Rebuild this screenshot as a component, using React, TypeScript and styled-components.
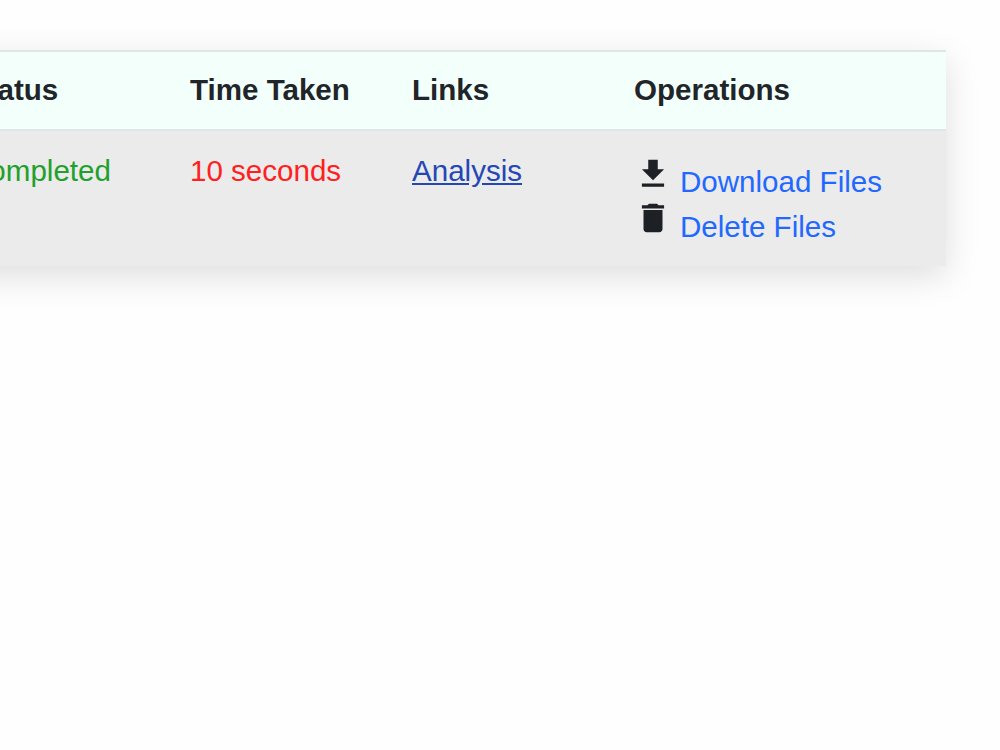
import React from "react";
import styled, { createGlobalStyle } from "styled-components";

const Global = createGlobalStyle`
  html, body { margin: 0; padding: 0; background: #fefefe; overflow: hidden; }
  body { font-family: "Liberation Sans", Arial, sans-serif; color: #212529; }
`;

const Page = styled.div`
  width: 1000px;
  height: 750px;
  overflow: hidden;
  padding-top: 50px;
  box-sizing: border-box;
`;

const Table = styled.table`
  width: 996px;
  margin-left: -50px;
  table-layout: fixed;
  border-collapse: separate;
  border-spacing: 0;
  font-size: 29.55px;
  line-height: 45px;
  box-shadow: 0 10px 32px rgba(0, 0, 0, 0.13);
`;

const Col = styled.col<{ $w: number }>`
  width: ${(p) => p.$w}px;
`;

const HeadRow = styled.tr`
  background: #f3fffb;
`;

const HeadCell = styled.th`
  padding: 15px 0 17px 0;
  text-align: left;
  font-weight: 700;
  color: #212529;
  border-top: 2px solid #e0e5e8;
  border-bottom: 2px solid #e0e5e8;
  box-sizing: border-box;
  &:first-child { padding-left: 18px; }
`;

const BodyRow = styled.tr`
  background: #ebebeb;
`;

const Cell = styled.td<{ $color?: string }>`
  padding: 17px 0 17px 0;
  vertical-align: top;
  color: ${(p) => p.$color ?? "#212529"};
  &:first-child { padding-left: 18px; }
`;

const TextLink = styled.a`
  color: #2447b5;
  text-decoration: underline;
`;

const Operations = styled.div`
  display: flex;
  flex-direction: column;
  padding-top: 11px;
`;

const Operation = styled.div`
  display: flex;
  height: 45px;
  align-items: flex-start;
`;

const IconBox = styled.svg<{ $lift: number }>`
  width: 38px;
  height: 38px;
  flex: none;
  margin-top: ${(p) => -p.$lift}px;
  margin-right: 8px;
  fill: #1d2024;
`;

const OpLink = styled.a`
  color: #2268ff;
  text-decoration: none;
`;

export default function App() {
  return (
    <>
      <Global />
      <Page>
        <Table>
          <colgroup>
            <Col $w={240} />
            <Col $w={222} />
            <Col $w={222} />
            <Col $w={312} />
          </colgroup>
          <thead>
            <HeadRow>
              <HeadCell>Status</HeadCell>
              <HeadCell>Time Taken</HeadCell>
              <HeadCell>Links</HeadCell>
              <HeadCell>Operations</HeadCell>
            </HeadRow>
          </thead>
          <tbody>
            <BodyRow>
              <Cell $color="#22a02c">Completed</Cell>
              <Cell $color="#ff2020">10 seconds</Cell>
              <Cell><TextLink href="#">Analysis</TextLink></Cell>
              <Cell>
                <Operations>
                  <Operation>
                    <IconBox $lift={4} viewBox="0 0 24 24"><path d="M19 9h-4V3H9v6H5l7 7 7-7zM5 18v2h14v-2H5z" /></IconBox>
                    <OpLink href="#">Download Files</OpLink>
                  </Operation>
                  <Operation>
                    <IconBox $lift={5} viewBox="0 0 24 24"><path d="M6 19c0 1.1.9 2 2 2h8c1.1 0 2-.9 2-2V7H6v12zM19 4h-3.5l-1-1h-5l-1 1H5v2h14V4z" /></IconBox>
                    <OpLink href="#">Delete Files</OpLink>
                  </Operation>
                </Operations>
              </Cell>
            </BodyRow>
          </tbody>
        </Table>
      </Page>
    </>
  );
}
